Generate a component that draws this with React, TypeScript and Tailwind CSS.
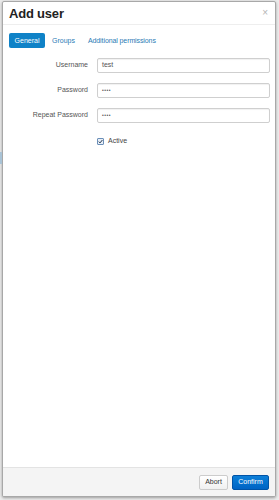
import React from "react";

export default function App() {
  return (
    <div className="w-[279px] h-[500px] bg-[#ececec] pt-[1px] pl-[2px] pr-[3px] pb-[3px] flex relative" style={{ fontFamily: '"Liberation Sans", Arial, sans-serif' }}>
      <div className="absolute left-0 top-[152px] w-[2px] h-[12px] bg-[#a9c3d6]" />
      <div className="flex-1 flex flex-col bg-white border border-[#a8a8a8] shadow-[0_1px_3px_rgba(0,0,0,0.35)] rounded-[2px] overflow-hidden">
        <div className="h-[23px] flex items-center justify-between pl-[6px] pr-[7px] border-b border-[#eeeeee] shrink-0">
          <span className="text-[13px] font-bold text-[#222] leading-none tracking-[-0.2px]">Add user</span>
          <span className="text-[10px] text-[#b5b5b5] leading-none">×</span>
        </div>
        <div className="flex-1 flex flex-col">
          <div className="flex items-center pl-[6px] mt-[8px] text-[7px] leading-none">
            <span className="bg-[#0f82c7] text-white rounded-[2px] w-[36px] h-[15px] flex items-center justify-center">General</span>
            <span className="text-[#2a7ab5] ml-[7px]">Groups</span>
            <span className="text-[#2a7ab5] ml-[13px] tracking-[-0.1px]">Additional permissions</span>
          </div>
          <div className="flex flex-col gap-[10px] mt-[10px] text-[7px] text-[#444]">
            {[
              ["Username", "test"],
              ["Password", "••••"],
              ["Repeat Password", "••••"],
            ].map(([label, val]) => (
              <div key={label} className="flex items-center">
                <span className="w-[85px] text-right text-[#555]">{label}</span>
                <div className="ml-[9px] w-[173px] h-[15px] border border-[#cfcfcf] rounded-[2px] flex items-center pl-[4px] text-[#555] shadow-[inset_0_1px_1px_rgba(0,0,0,0.06)]">
                  <span className={val === "test" ? "text-[7px]" : "text-[5px] tracking-[0.5px]"}>{val}</span>
                </div>
              </div>
            ))}
          </div>
          <div className="flex items-center mt-[13px] ml-[94px] gap-[4px] text-[7px] text-[#444]">
            <span className="w-[7px] h-[7px] border border-[#6b8fb8] bg-[#e8eef6] rounded-[1px] flex items-center justify-center">
              <svg width="5" height="5" viewBox="0 0 10 10"><path d="M1.5 5.2 L4 7.8 L8.8 2" stroke="#1f3550" strokeWidth="2" fill="none" /></svg>
            </span>
            <span>Active</span>
          </div>
        </div>
        <div className="h-[29px] shrink-0 bg-[#f4f4f4] border-t border-[#e3e3e3] flex items-center justify-end gap-[4px] pr-[6px] text-[7px]">
          <button className="w-[29px] h-[15px] border border-[#cccccc] bg-gradient-to-b from-white to-[#f0f0f0] rounded-[2px] text-[#333]">Abort</button>
          <button className="w-[37px] h-[15px] border border-[#0053a6] bg-gradient-to-b from-[#0d7fd8] to-[#0063c4] rounded-[2px] text-white">Confirm</button>
        </div>
      </div>
    </div>
  );
}
